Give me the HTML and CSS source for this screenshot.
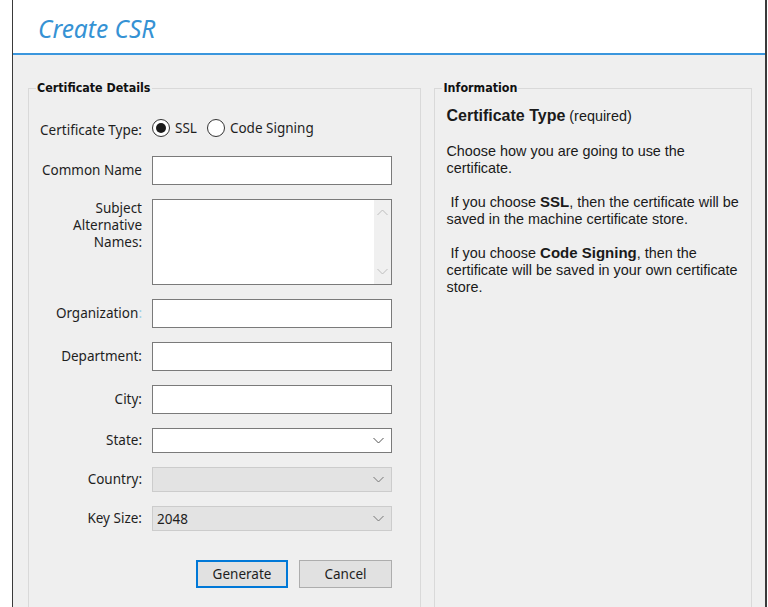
FILE: index.html
```html
<!DOCTYPE html>
<html lang="en">
<head>
    <meta charset="UTF-8">
    <title>Create CSR</title>
    <link rel="stylesheet" href="styles.css">
</head>
<body>
    <div class="window">
        <div class="header">
            <h1>Create CSR</h1>
        </div>
        <div class="content">
            <fieldset class="group details">
                <legend>Certificate Details</legend>
                <div class="form">
                    <label class="lbl">Certificate Type:</label>
                    <div class="radios">
                        <label class="radio"><input type="radio" name="type" checked> SSL</label>
                        <label class="radio"><input type="radio" name="type"> Code Signing</label>
                    </div>

                    <label class="lbl">Common Name</label>
                    <input class="text" type="text">

                    <label class="lbl top">Subject<br>Alternative<br>Names:</label>
                    <div class="textarea">
                        <textarea></textarea>
                        <div class="scroll">
                            <svg width="11" height="7" viewBox="0 0 11 7"><polyline points="0.5,6 5.5,1 10.5,6" /></svg>
                            <svg width="11" height="7" viewBox="0 0 11 7"><polyline points="0.5,1 5.5,6 10.5,1" /></svg>
                        </div>
                    </div>

                    <label class="lbl">Organization<span class="faint">:</span></label>
                    <input class="text" type="text">

                    <label class="lbl">Department:</label>
                    <input class="text" type="text">

                    <label class="lbl">City:</label>
                    <input class="text" type="text">

                    <label class="lbl">State:</label>
                    <div class="combo">
                        <span></span>
                        <svg width="11" height="7" viewBox="0 0 11 7"><polyline points="0.5,1 5.5,6 10.5,1" /></svg>
                    </div>

                    <label class="lbl">Country:</label>
                    <div class="combo disabled">
                        <span></span>
                        <svg width="11" height="7" viewBox="0 0 11 7"><polyline points="0.5,1 5.5,6 10.5,1" /></svg>
                    </div>

                    <label class="lbl">Key Size:</label>
                    <div class="combo disabled">
                        <span>2048</span>
                        <svg width="11" height="7" viewBox="0 0 11 7"><polyline points="0.5,1 5.5,6 10.5,1" /></svg>
                    </div>

                    <div class="buttons">
                        <button class="btn primary">Generate</button>
                        <button class="btn">Cancel</button>
                    </div>
                </div>
            </fieldset>

            <fieldset class="group info">
                <legend>Information</legend>
                <div class="info-body">
                    <p class="info-title"><b>Certificate Type</b> (required)</p>
                    <p>Choose how you are going to use the certificate.</p>
                    <p>&nbsp;If you choose <b>SSL</b>, then the certificate will be saved in the machine certificate store.</p>
                    <p>&nbsp;If you choose <b>Code Signing</b>, then the certificate will be saved in your own certificate store.</p>
                </div>
            </fieldset>
        </div>
    </div>
</body>
</html>
```

FILE: styles.css
```css
html, body {
    margin: 0;
    padding: 0;
    height: 100%;
    overflow: hidden;
    background: #ffffff;
}
body {
    font-family: "Noto Sans", sans-serif;
    font-size: 13.5px;
    color: #1e1e1e;
}
.window {
    margin-left: 12px;
    width: 752px;
    height: 100%;
    border-left: 1px solid #3a3a3a;
    border-right: 2px solid #3a3a3a;
    background: #efefef;
}
.header {
    height: 53px;
    background: #ffffff;
    border-bottom: 2px solid #3a96dd;
}
.header h1 {
    margin: 0;
    padding: 13px 0 0 25px;
    font-size: 24.5px;
    font-style: italic;
    font-weight: normal;
    color: #3592d4;
    line-height: 32px;
}
.content {
    display: flex;
    gap: 13px;
    padding: 25px 13px 0 15px;
}
.group {
    margin: 0;
    padding: 0;
    border: 1px solid #d9d9d9;
    height: 640px;
    box-sizing: border-box;
}
.group legend {
    font-family: "DejaVu Sans Condensed", "DejaVu Sans", sans-serif;
    font-weight: bold;
    font-size: 12.4px;
    line-height: 16px;
    color: #111;
    padding: 0 1px;
    margin-left: 7px;
}
.details {
    width: 394px;
    padding-top: 22px;
}
.info {
    width: 318px;
}
.info-body {
    padding: 10px 4px 0 11px;
    font-family: "Liberation Sans", Arial, sans-serif;
    font-size: 14.4px;
    line-height: 17px;
    color: #1a1a1a;
}

/* left form */
.form {
    display: grid;
    grid-template-columns: 113px 240px;
    column-gap: 10px;
    row-gap: 14px;
    align-items: center;
}
.lbl {
    text-align: right;
    line-height: 17px;
}
.lbl.top {
    align-self: start;
    padding-top: 1px;
}
.faint {
    color: #9fd0e6;
}
.radios {
    display: flex;
    gap: 10px;
    height: 20px;
    align-items: center;
    margin-bottom: 4px;
}
.radio {
    display: flex;
    align-items: center;
    gap: 5px;
}
.radio input {
    appearance: none;
    margin: 0;
    width: 18px;
    height: 18px;
    border: 1px solid #333;
    border-radius: 50%;
    background: #fff;
    position: relative;
}
.radio input:checked::after {
    content: "";
    position: absolute;
    left: 3px;
    top: 3px;
    width: 10px;
    height: 10px;
    border-radius: 50%;
    background: #1a1a1a;
}
.text {
    box-sizing: border-box;
    height: 29px;
    width: 240px;
    margin: 0;
    border: 1px solid #7a7a7a;
    background: #fff;
}
.textarea {
    box-sizing: border-box;
    height: 86px;
    width: 240px;
    border: 1px solid #7a7a7a;
    background: #fff;
    display: flex;
}
.textarea textarea {
    flex: 1;
    border: none;
    resize: none;
    margin: 0;
    outline: none;
}
.scroll {
    width: 17px;
    background: #f0f0f0;
    display: flex;
    flex-direction: column;
    justify-content: space-between;
    align-items: center;
    padding: 9px 0;
}
.scroll polyline, .combo polyline {
    fill: none;
    stroke: #bdbdbd;
    stroke-width: 1;
}
.combo {
    box-sizing: border-box;
    height: 25px;
    width: 240px;
    border: 1px solid #7a7a7a;
    background: #fff;
    display: flex;
    align-items: center;
    justify-content: space-between;
    padding: 0 7px 0 4px;
}
.combo polyline {
    stroke: #555;
}
.combo.disabled {
    background: #e3e3e3;
    border-color: #cccccc;
}
.combo.disabled polyline {
    stroke: #777;
}
.buttons {
    grid-column: 2;
    display: flex;
    justify-content: flex-end;
    gap: 11px;
    margin-top: 15px;
}
.btn {
    box-sizing: border-box;
    width: 93px;
    height: 28px;
    background: #e1e1e1;
    border: 1px solid #adadad;
    font-family: "Noto Sans", sans-serif;
    font-size: 13.5px;
    color: #1e1e1e;
    padding: 0;
}
.btn.primary {
    width: 92px;
    border: 2px solid #0078d7;
}

/* right info */
.info-body p {
    margin: 0 0 17px 0;
}
.info-body b {
    font-size: 15px;
    line-height: 15px;
}
.info-body .info-title {
    margin-bottom: 17px;
    line-height: 20px;
}
.info-title b {
    font-size: 16px;
}
```
